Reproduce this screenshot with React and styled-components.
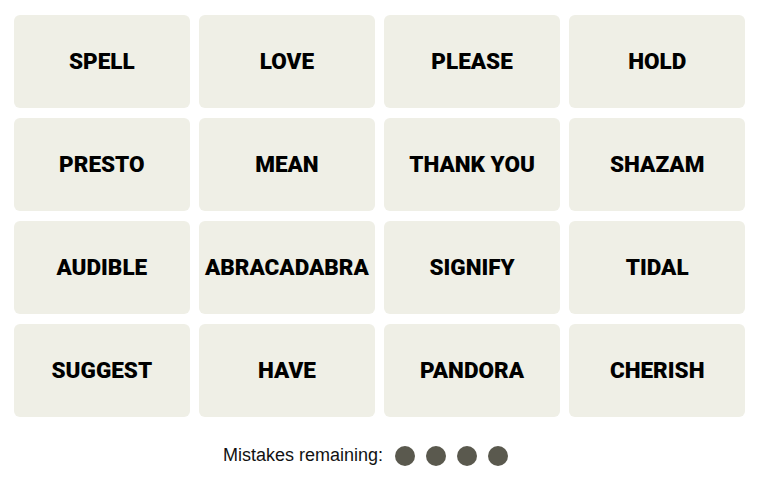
import styled, { createGlobalStyle } from "styled-components"

const GlobalStyle = createGlobalStyle`
  html, body {
    margin: 0;
    padding: 0;
    background: #ffffff;
  }
  body {
    font-family: "Liberation Sans", Arial, sans-serif;
  }
`

const Page = styled.div`
  width: 768px;
  height: 484px;
  box-sizing: border-box;
  padding: 15px 0 0 14px;
  display: flex;
  flex-direction: column;
`

const Board = styled.div`
  width: 731px;
  display: grid;
  grid-template-columns: repeat(4, 1fr);
  grid-auto-rows: 93px;
  column-gap: 9.5px;
  row-gap: 10px;
`

const Tile = styled.button`
  border: none;
  border-radius: 6px;
  background: #efefe6;
  color: #000000;
  font-family: Roboto, "Liberation Sans", Arial, sans-serif;
  font-weight: 900;
  font-size: 22.5px;
  text-transform: uppercase;
  display: flex;
  align-items: center;
  justify-content: center;
  padding: 0 0 1px;
  cursor: pointer;
`

const Mistakes = styled.div`
  width: 731px;
  display: flex;
  justify-content: center;
  align-items: center;
  margin-top: 28px;
`

const MistakesInner = styled.div`
  width: 313px;
  display: flex;
  align-items: center;
  gap: 12px;
`

const Label = styled.span`
  font-size: 18px;
  color: #121212;
  white-space: nowrap;
`

const Dots = styled.div`
  display: flex;
  gap: 11px;
`

const Dot = styled.span`
  width: 20px;
  height: 20px;
  border-radius: 50%;
  background: ${props => props.used ? "transparent" : "#5a594e"};
`

const words = [
  "Spell", "Love", "Please", "Hold",
  "Presto", "Mean", "Thank You", "Shazam",
  "Audible", "Abracadabra", "Signify", "Tidal",
  "Suggest", "Have", "Pandora", "Cherish",
]

export default function App() {
  return (
    <Page>
      <GlobalStyle />
      <Board>
        {words.map(w => (
          <Tile key={w}>{w}</Tile>
        ))}
      </Board>
      <Mistakes>
        <MistakesInner>
          <Label>Mistakes remaining:</Label>
          <Dots>
            {[0, 1, 2, 3].map(i => <Dot key={i} />)}
          </Dots>
        </MistakesInner>
      </Mistakes>
    </Page>
  )
}
